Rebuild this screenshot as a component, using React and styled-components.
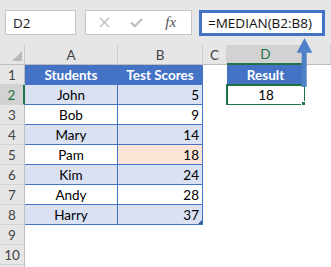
import React from "react";
import styled, { createGlobalStyle } from "styled-components";

const GlobalStyle = createGlobalStyle`
  html, body {
    margin: 0;
    padding: 0;
    background: #fff;
  }
  * {
    box-sizing: border-box;
  }
`;

const Window = styled.div`
  position: relative;
  width: 331px;
  height: 267px;
  overflow: hidden;
  background: #fff;
  font-family: Lato, "Liberation Sans", sans-serif;
`;

const FormulaBar = styled.div`
  display: flex;
  align-items: flex-start;
  height: 45px;
  padding: 10px 0 0 5px;
  background: #e6e6e6;
`;

const NameBox = styled.div`
  width: 71px;
  height: 25px;
  display: flex;
  align-items: center;
  padding-left: 7px;
  background: #fff;
  border: 1px solid #c6c6c6;
  font-family: "Open Sans", sans-serif;
  font-size: 13.5px;
  color: #222;
`;

const ButtonBox = styled.div`
  width: 107px;
  height: 25px;
  margin-left: 9px;
  display: flex;
  align-items: center;
  background: #fff;
  border: 1px solid #c6c6c6;
`;

const IconSlot = styled.div`
  width: ${(p) => p.$w}px;
  height: 100%;
  display: flex;
  align-items: center;
  justify-content: center;
`;

const Fx = styled.span`
  font-family: "Liberation Serif", serif;
  font-style: italic;
  font-size: 15px;
  color: #555;
`;

const FormulaBox = styled.div`
  width: 126px;
  height: 26px;
  margin-left: 7px;
  display: flex;
  align-items: center;
  padding-left: 6px;
  background: #fff;
  border: 3px solid #4472c4;
  font-family: "Open Sans", sans-serif;
  font-size: 13.5px;
  color: #111;
  white-space: nowrap;
`;

const Sheet = styled.div`
  display: grid;
  grid-template-columns: 25px 93px 85px 24px 78px 1fr;
  grid-auto-rows: 20px;
  font-size: 13.5px;
`;

const Corner = styled.div`
  position: relative;
  background: #e6e6e6;
  border-right: 1px solid #c8c8c8;
  border-bottom: 1px solid #bdbdbd;
  &::after {
    content: "";
    position: absolute;
    right: 2px;
    bottom: 3px;
    border-left: 10px solid transparent;
    border-bottom: 10px solid #b9b9b9;
  }
`;

const ColHead = styled.div`
  display: flex;
  align-items: center;
  justify-content: center;
  background: ${(p) => (p.$active ? "#d2d2d2" : "#e6e6e6")};
  border-right: 1px solid #d0d0d0;
  border-bottom: ${(p) => (p.$active ? "2px solid #217346" : "1px solid #bdbdbd")};
  color: ${(p) => (p.$active ? "#217346" : "#444")};
`;

const RowHead = styled.div`
  display: flex;
  align-items: center;
  justify-content: center;
  background: ${(p) => (p.$active ? "#d2d2d2" : "#e6e6e6")};
  border-right: ${(p) => (p.$active ? "2px solid #217346" : "1px solid #bdbdbd")};
  border-bottom: 1px solid #d4d4d4;
  color: ${(p) => (p.$active ? "#217346" : "#444")};
`;

const Cell = styled.div`
  position: relative;
  display: flex;
  align-items: center;
  justify-content: ${(p) => p.$align || "center"};
  padding: 0 3px;
  background: ${(p) => p.$fill || "#fff"};
  color: ${(p) => (p.$head ? "#fff" : "#000")};
  font-weight: ${(p) => (p.$head ? 700 : 400)};
  border-right: ${(p) => (p.$lined ? "1px solid #4472c4" : "none")};
  border-bottom: ${(p) => (p.$lined ? "1px solid #4472c4" : "none")};
`;

const Selection = styled.div`
  position: absolute;
  left: -1px;
  top: -1px;
  right: -1px;
  bottom: -1px;
  border: 2px solid #217346;
  &::after {
    content: "";
    position: absolute;
    right: -4px;
    bottom: -4px;
    width: 5px;
    height: 5px;
    background: #217346;
    border: 1px solid #fff;
  }
`;

const ResizeMark = styled.div`
  position: absolute;
  right: 0;
  bottom: 0;
  border-left: 4px solid transparent;
  border-bottom: 4px solid #2f5597;
`;

const Arrow = styled.svg`
  position: absolute;
  left: 296px;
  top: 37px;
`;

const BLUE = "#4472c4";
const LIGHT = "#d9e1f2";
const PEACH = "#fce4d6";

const students = [
  ["John", 5],
  ["Bob", 9],
  ["Mary", 14],
  ["Pam", 18],
  ["Kim", 24],
  ["Andy", 28],
  ["Harry", 37],
];

const App = () => {
  const rows = [];

  rows.push(
    <React.Fragment key="r1">
      <RowHead>1</RowHead>
      <Cell $fill={BLUE} $head $lined>Students</Cell>
      <Cell $fill={BLUE} $head $lined>Test Scores</Cell>
      <Cell />
      <Cell $fill={BLUE} $head $lined>Result</Cell>
      <Cell />
    </React.Fragment>
  );

  students.forEach(([name, score], i) => {
    const n = i + 2;
    const fill = n % 2 === 0 ? LIGHT : "#fff";
    rows.push(
      <React.Fragment key={n}>
        <RowHead $active={n === 2}>{n}</RowHead>
        <Cell $fill={fill} $lined>{name}</Cell>
        <Cell $fill={n === 5 ? PEACH : fill} $lined $align="flex-end">
          {score}
          {n === 8 && <ResizeMark />}
        </Cell>
        <Cell />
        {n === 2 ? (
          <Cell>
            18
            <Selection />
          </Cell>
        ) : (
          <Cell />
        )}
        <Cell />
      </React.Fragment>
    );
  });

  [9, 10, null].forEach((n, i) => {
    rows.push(
      <React.Fragment key={"e" + i}>
        <RowHead>{n}</RowHead>
        <Cell />
        <Cell />
        <Cell />
        <Cell />
        <Cell />
      </React.Fragment>
    );
  });

  return (
    <Window>
      <GlobalStyle />
      <FormulaBar>
        <NameBox>D2</NameBox>
        <ButtonBox>
          <IconSlot $w={38}>
            <svg width="11" height="11" viewBox="0 0 11 11">
              <path d="M1 1 L10 10 M10 1 L1 10" stroke="#bdbdbd" strokeWidth="1.4" />
            </svg>
          </IconSlot>
          <IconSlot $w={29}>
            <svg width="13" height="11" viewBox="0 0 13 11">
              <path d="M1 5.5 L4.8 9.3 L12 2" stroke="#bdbdbd" strokeWidth="2.2" fill="none" />
            </svg>
          </IconSlot>
          <IconSlot $w={42}>
            <Fx>fx</Fx>
          </IconSlot>
        </ButtonBox>
        <FormulaBox>=MEDIAN(B2:B8)</FormulaBox>
      </FormulaBar>

      <Sheet>
        <Corner />
        <ColHead>A</ColHead>
        <ColHead>B</ColHead>
        <ColHead>C</ColHead>
        <ColHead $active>D</ColHead>
        <ColHead />
        {rows}
      </Sheet>

      <Arrow width="17" height="51" viewBox="0 0 17 51">
        <rect x="5.7" y="14" width="5" height="36" fill="#4f81c9" />
        <polygon points="0.7,15.7 8.5,1 16.3,15.7" fill="#4f81c9" />
      </Arrow>
    </Window>
  );
};

export default App;
